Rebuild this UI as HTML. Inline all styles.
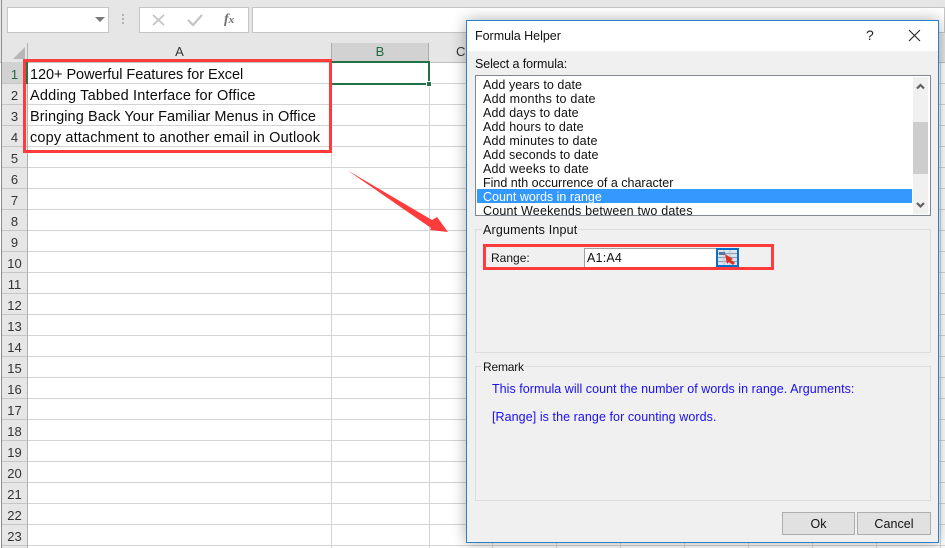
<!DOCTYPE html>
<html><head><meta charset="utf-8">
<style>
html,body{margin:0;padding:0;background:#fff}
#p{position:relative;width:945px;height:548px;overflow:hidden;background:#fff;font-family:"Liberation Sans",sans-serif;color:#111}
#p div{position:absolute;box-sizing:border-box}
.t{white-space:nowrap}
.h{left:2px;width:25px;height:21px;background:#e6e6e6;border-bottom:1px solid #c6c6c6;text-align:center;font-size:13px;line-height:23px;color:#333}
.c{left:30px;font-size:14.5px;line-height:21px;color:#0c0c0c;white-space:nowrap}
.l{left:7px;font-size:12.5px;letter-spacing:.1px;line-height:14px;white-space:nowrap;color:#111}
.d{font-size:12.5px;letter-spacing:.05px;line-height:14px;white-space:nowrap;color:#111}
.b{color:#1a10f0}
.g{top:43px;width:1px;height:505px;background:#d4d4d4}
</style></head><body>
<div id="p">
<!-- grid -->
<div style="left:27px;top:63px;width:918px;height:485px;background:repeating-linear-gradient(to bottom,transparent 0,transparent 20px,#d4d4d4 20px,#d4d4d4 21px)"></div>
<div class="g" style="left:331px"></div>
<div class="g" style="left:429px"></div>
<div class="g" style="left:492px"></div>
<div class="g" style="left:556px"></div>
<div class="g" style="left:620px"></div>
<div class="g" style="left:684px"></div>
<div class="g" style="left:748px"></div>
<div class="g" style="left:812px"></div>
<div class="g" style="left:876px"></div>
<div class="g" style="left:940px"></div>

<!-- toolbar -->
<div style="left:0;top:0;width:945px;height:62px;background:#e6e6e6"></div>
<div style="left:0;top:43px;width:945px;height:20px;background:#e6e6e6;border-bottom:1px solid #c0c0c0"></div>
<div style="left:7px;top:7px;width:102px;height:26px;background:#fff;border:1px solid #c6c6c6"></div>
<svg style="position:absolute;left:94px;top:16px" width="12" height="7"><path d="M1 1H11L6 6Z" fill="#7a7a7a"/></svg>
<svg style="position:absolute;left:121px;top:14px" width="6" height="12"><path d="M1 0h2v2h-2zM1 4h2v2h-2zM1 8h2v2h-2z" fill="#b4b4b4"/></svg>
<div style="left:139px;top:7px;width:110px;height:26px;background:#fff;border:1px solid #c6c6c6"></div>
<svg style="position:absolute;left:150px;top:12px" width="100" height="16"><path d="M3 3L14 13M14 3L3 13" stroke="#c4c4c4" stroke-width="1.8" fill="none"/><path d="M38 8L43 13L52 3" stroke="#c4c4c4" stroke-width="2.2" fill="none"/></svg>
<div class="t" style="left:224px;top:12px;font:italic bold 14px 'Liberation Serif',serif;color:#707070;line-height:16px">f<span style="font-size:11px">x</span></div>
<div style="left:252px;top:7px;width:693px;height:26px;background:#fff;border:1px solid #c6c6c6"></div>

<!-- left edge -->
<div style="left:1px;top:0;width:1px;height:548px;background:#8e8e8e"></div>
<div style="left:2px;top:62px;width:25px;height:486px;background:#e6e6e6"></div>
<div style="left:27px;top:43px;width:1px;height:505px;background:#b0b0b0"></div>
<svg style="position:absolute;left:12px;top:46px" width="14" height="14"><path d="M13 1V13H1Z" fill="#b6b6b6"/></svg>

<!-- col headers -->
<div style="left:28px;top:43px;width:303px;height:19px;text-align:center;font-size:13px;line-height:18px;color:#333">A</div>
<div style="left:331px;top:43px;width:98px;height:19px;background:#d2d2d2;border-right:1px solid #ababab;border-left:1px solid #ababab;text-align:center;font-size:13px;line-height:18px;color:#1d6a40">B</div>
<div style="left:456px;top:43px;width:10px;height:19px;font-size:13px;line-height:18px;color:#333">C</div>

<!-- row headers -->
<div class="h" style="background:#d2d2d2;color:#1d6a40;top:62px;height:22px;line-height:25px">1</div>
<div class="h" style="top:84px">2</div>
<div class="h" style="top:105px">3</div>
<div class="h" style="top:126px">4</div>
<div class="h" style="top:147px">5</div>
<div class="h" style="top:168px">6</div>
<div class="h" style="top:189px">7</div>
<div class="h" style="top:210px">8</div>
<div class="h" style="top:231px">9</div>
<div class="h" style="top:252px">10</div>
<div class="h" style="top:273px">11</div>
<div class="h" style="top:294px">12</div>
<div class="h" style="top:315px">13</div>
<div class="h" style="top:336px">14</div>
<div class="h" style="top:357px">15</div>
<div class="h" style="top:378px">16</div>
<div class="h" style="top:399px">17</div>
<div class="h" style="top:420px">18</div>
<div class="h" style="top:441px">19</div>
<div class="h" style="top:462px">20</div>
<div class="h" style="top:483px">21</div>
<div class="h" style="top:504px">22</div>
<div class="h" style="top:525px">23</div>

<!-- cells -->
<div style="left:26px;top:62px;width:2px;height:22px;background:#217346"></div>
<div class="c" style="top:65px;letter-spacing:-.05px">120+ Powerful Features for Excel</div>
<div class="c" style="top:86px;letter-spacing:.18px">Adding Tabbed Interface for Office</div>
<div class="c" style="top:107px;letter-spacing:.08px">Bringing Back Your Familiar Menus in Office</div>
<div class="c" style="top:128px;letter-spacing:.15px">copy attachment to another email in Outlook</div>

<!-- selection B1 -->
<div style="left:330px;top:61px;width:100px;height:24px;border:2px solid #217346"></div>
<div style="left:426px;top:81px;width:6px;height:6px;background:#217346;border:1px solid #fff"></div>

<!-- red box A -->
<div style="left:23px;top:59px;width:309px;height:94px;border:3px solid #ff3b3b"></div>

<!-- arrow -->
<svg style="position:absolute;left:340px;top:165px" width="115" height="72"><path d="M7 5L92 55L97 52L108 67L90 65L91 63Z" fill="#ff3b3b"/></svg>

<!-- dialog -->
<div style="left:466px;top:20px;width:473px;height:523px;background:#f0f0f0;border:1px solid #2b80c8;box-shadow:0 0 14px rgba(0,0,0,.32)"></div>
<div style="left:467px;top:21px;width:471px;height:30px;background:#fff"></div>
<div class="d" style="left:475px;top:29px;letter-spacing:-.02px">Formula Helper</div>
<div class="t" style="left:866px;top:27px;font-size:14px;line-height:16px;color:#222">?</div>
<svg style="position:absolute;left:908px;top:29px" width="13" height="13"><path d="M1 1L12 12M12 1L1 12" stroke="#222" stroke-width="1.1" fill="none"/></svg>
<div class="d" style="left:475px;top:57px;letter-spacing:-.1px">Select a formula:</div>

<!-- list -->
<div style="left:475px;top:75px;width:456px;height:141px;background:#fff;border:1px solid #828790;overflow:hidden">
  <div class="l" style="top:2px;letter-spacing:.06px">Add years to date</div>
  <div class="l" style="top:16px;letter-spacing:.24px">Add months to date</div>
  <div class="l" style="top:30px;letter-spacing:.12px">Add days to date</div>
  <div class="l" style="top:44px;letter-spacing:.12px">Add hours to date</div>
  <div class="l" style="top:58px;letter-spacing:.18px">Add minutes to date</div>
  <div class="l" style="top:72px;letter-spacing:.08px">Add seconds to date</div>
  <div class="l" style="top:86px;letter-spacing:.18px">Add weeks to date</div>
  <div class="l" style="top:100px;letter-spacing:0">Find nth occurrence of a character</div>
  <div style="left:1px;top:113px;width:435px;height:14px;background:#3399ff"></div>
  <div class="l" style="top:114px;color:#fff;letter-spacing:0">Count words in range</div>
  <div class="l" style="top:128px;letter-spacing:.2px">Count Weekends between two dates</div>
  <div style="left:437px;top:1px;width:15px;height:137px;background:#f0f0f0"></div>
  <div style="left:437px;top:46px;width:15px;height:52px;background:#cdcdcd"></div>
</div>
<svg style="position:absolute;left:913px;top:80px" width="15" height="132"><path d="M4 8.500L7.500 5L11 8.500" stroke="#606060" stroke-width="2.200" fill="none"/><path d="M4 123L7.500 126.500L11 123" stroke="#606060" stroke-width="2.200" fill="none"/></svg>

<!-- Arguments Input -->
<div style="left:475px;top:229px;width:456px;height:124px;border:1px solid #dcdcdc"></div>
<div class="d" style="left:482px;top:223px;background:#f0f0f0;padding:0 1px;letter-spacing:.18px">Arguments Input</div>
<div style="left:483px;top:244px;width:291px;height:26px;border:3px solid #ff3b3b"></div>
<div class="d" style="left:491px;top:251px;font-size:12px;letter-spacing:0">Range:</div>
<div style="left:584px;top:248px;width:155px;height:19px;background:#fff;border-left:1px solid #a0a0a0;border-top:1px solid #a0a0a0;border-right:1px solid #a0a0a0"></div>
<div class="d" style="left:587px;top:251px;letter-spacing:.2px">A1:A4</div>
<div style="left:716px;top:248px;width:23px;height:19px;background:#dfe6ee;border:2px solid #0a6fc9"></div>
<svg style="position:absolute;left:718px;top:250px" width="19" height="15"><path d="M0 3.500H19M0 7.500H19M0 11.500H19" stroke="#8ea2bb" stroke-width="1.300"/><path d="M6 0V15M12 0V15" stroke="#b6c3d3" stroke-width="1"/><path d="M1 2H7V5H1Z" fill="#55779f"/><path d="M7 4L15 9L13 10L17 13L15 15L11 12L9 14Z" fill="#e0301f"/></svg>

<!-- Remark -->
<div style="left:475px;top:366px;width:456px;height:135px;border:1px solid #dcdcdc"></div>
<div class="d" style="left:482px;top:360px;background:#f0f0f0;padding:0 1px;font-size:12px;letter-spacing:-.2px">Remark</div>
<div class="d b" style="left:492px;top:382px;letter-spacing:.04px">This formula will count the number of words in range. Arguments:</div>
<div class="d b" style="left:492px;top:410px;letter-spacing:.07px">[Range] is the range for counting words.</div>

<!-- buttons -->
<div style="left:782px;top:512px;width:73px;height:23px;background:#e1e1e1;border:1px solid #adadad"></div>
<div class="d" style="left:782px;top:517px;width:73px;text-align:center">Ok</div>
<div style="left:857px;top:512px;width:74px;height:23px;background:#e1e1e1;border:1px solid #adadad"></div>
<div class="d" style="left:857px;top:517px;width:74px;text-align:center">Cancel</div>
</div>
</body></html>
